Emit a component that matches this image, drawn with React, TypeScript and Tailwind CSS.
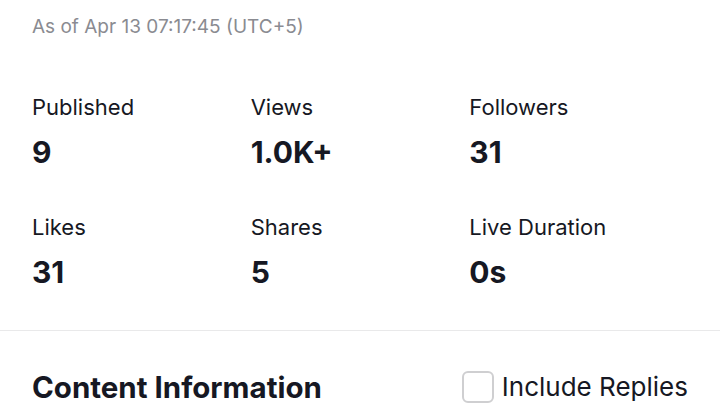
const stats = [
  { label: "Published", value: "9" },
  { label: "Views", value: "1.0K+" },
  { label: "Followers", value: "31" },
  { label: "Likes", value: "31" },
  { label: "Shares", value: "5" },
  { label: "Live Duration", value: "0s" },
];

export default function App() {
  return (
    <div className="w-[720px] h-[404px] overflow-hidden bg-white text-[#161823] font-['Inter',sans-serif]">
      <div className="px-8 pt-[14px]">
        <p className="text-[19px] leading-[26px] text-[#8a8b91]">As of Apr 13 07:17:45 (UTC+5)</p>
        <div className="grid grid-cols-3 gap-y-[42px] pt-[53px]">
          {stats.map((s) => (
            <div key={s.label} className="flex flex-col">
              <span className="text-[22px] leading-[28px]">{s.label}</span>
              <span className="text-[30px] leading-[38px] font-bold mt-[12px]">{s.value}</span>
            </div>
          ))}
        </div>
      </div>
      <div className="h-px bg-[#e9e9ea] mt-[39px]" />
      <div className="flex items-center justify-between px-8 pt-[38px]">
        <h2 className="text-[29.5px] leading-[36px] font-bold">Content Information</h2>
        <label className="flex items-center gap-[8px]">
          <span className="w-[32px] h-[32px] rounded-[6px] border-2 border-[#cfcfd1] bg-white" />
          <span className="text-[26px] leading-[32px]">Include Replies</span>
        </label>
      </div>
    </div>
  );
}
